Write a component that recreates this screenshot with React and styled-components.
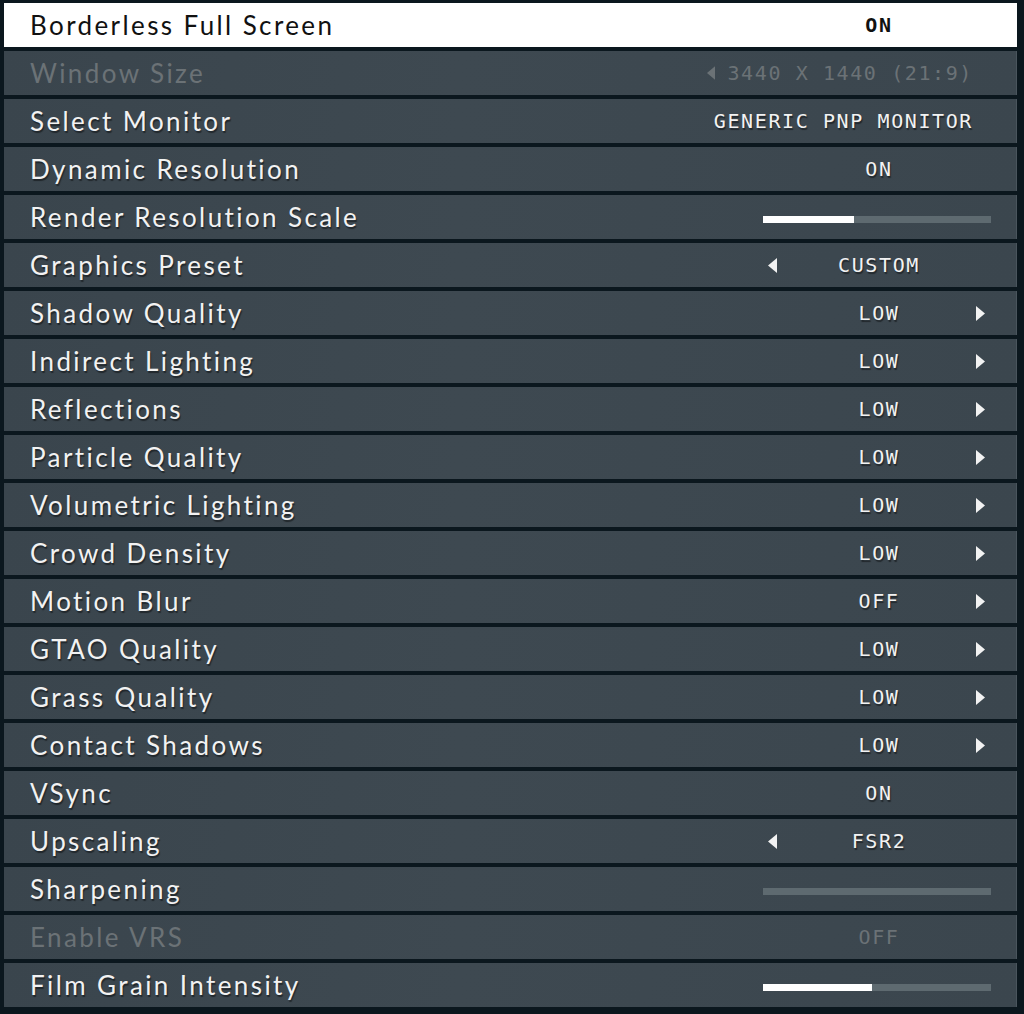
import React from "react";
import styled, { createGlobalStyle } from "styled-components";

const GlobalStyle = createGlobalStyle`
  html, body {
    margin: 0;
    padding: 0;
    background: #0b171e;
  }
`;

const Panel = styled.div`
  display: flex;
  flex-direction: column;
  gap: 4px;
  padding: 3px 7px 7px 4px;
  background: #0b171e;
  min-height: 1014px;
  box-sizing: border-box;
`;

const Row = styled.div`
  height: 44px;
  display: flex;
  align-items: center;
  justify-content: space-between;
  padding-left: 26px;
  box-sizing: border-box;
  background: ${(p) =>
    p.$active
      ? "#ffffff"
      : "linear-gradient(100deg, #3a454d 0%, #3e4951 45%, #3b464e 100%)"};
  border-right: 1px solid ${(p) => (p.$active ? "#ffffff" : "#4a555d")};
`;

const Label = styled.span`
  font-family: "Lato", "Liberation Sans", sans-serif;
  font-size: 26px;
  font-weight: 400;
  letter-spacing: 2.4px;
  color: ${(p) => (p.$active ? "#111" : p.$disabled ? "#6b7276" : "#f2f2f2")};
  text-shadow: ${(p) =>
    p.$active || p.$disabled ? "none" : "1px 2px 1px rgba(0, 0, 0, 0.45)"};
`;

const Control = styled.div`
  width: 228px;
  margin-right: 24px;
  display: grid;
  grid-template-columns: 14px minmax(0, 1fr) 14px;
  align-items: center;
  padding: 0 2px 0 4px;
  box-sizing: border-box;
`;

const Value = styled.span`
  display: flex;
  align-items: center;
  justify-content: ${(p) => (p.$wide ? "flex-end" : "center")};
  gap: 12px;
  white-space: nowrap;
  margin-right: ${(p) => (p.$wide ? "3px" : "0")};
  font-family: "DejaVu Sans Mono", "Liberation Mono", monospace;
  font-size: 20px;
  letter-spacing: 1.6px;
  font-weight: ${(p) => (p.$active ? 700 : 400)};
  color: ${(p) => (p.$active ? "#111" : p.$disabled ? "#6b7276" : "#f2f2f2")};
  text-shadow: ${(p) =>
    p.$active || p.$disabled ? "none" : "1px 2px 1px rgba(0, 0, 0, 0.45)"};

  svg {
    flex-shrink: 0;
  }
`;

const Track = styled.div`
  width: 228px;
  height: 7px;
  margin-right: 25px;
  margin-top: 4px;
  background: #5e6a70;
`;

const Fill = styled.div`
  height: 100%;
  background: #ffffff;
`;

const Arrow = ({ dir, color = "#f2f2f2", w = 9, h = 15 }) => (
  <svg width={w} height={h} viewBox="0 0 9 15" style={{ display: "block" }}>
    {dir === "left" ? (
      <polygon points="9,0 9,15 0,7.5" fill={color} />
    ) : (
      <polygon points="0,0 0,15 9,7.5" fill={color} />
    )}
  </svg>
);

const rows = [
  { label: "Borderless Full Screen", value: "ON", active: true },
  { label: "Window Size", value: "3440 X 1440 (21:9)", disabled: true, wide: true, inlineLeft: true },
  { label: "Select Monitor", value: "GENERIC PNP MONITOR", wide: true },
  { label: "Dynamic Resolution", value: "ON" },
  { label: "Render Resolution Scale", slider: 40 },
  { label: "Graphics Preset", value: "CUSTOM", left: true },
  { label: "Shadow Quality", value: "LOW", right: true },
  { label: "Indirect Lighting", value: "LOW", right: true },
  { label: "Reflections", value: "LOW", right: true },
  { label: "Particle Quality", value: "LOW", right: true },
  { label: "Volumetric Lighting", value: "LOW", right: true },
  { label: "Crowd Density", value: "LOW", right: true },
  { label: "Motion Blur", value: "OFF", right: true },
  { label: "GTAO Quality", value: "LOW", right: true },
  { label: "Grass Quality", value: "LOW", right: true },
  { label: "Contact Shadows", value: "LOW", right: true },
  { label: "VSync", value: "ON" },
  { label: "Upscaling", value: "FSR2", left: true },
  { label: "Sharpening", slider: 0 },
  { label: "Enable VRS", value: "OFF", disabled: true },
  { label: "Film Grain Intensity", slider: 48 },
];

const SettingRow = ({ row }) => (
  <Row $active={row.active}>
    <Label $active={row.active} $disabled={row.disabled}>
      {row.label}
    </Label>
    {row.slider !== undefined ? (
      <Track>
        <Fill style={{ width: `${row.slider}%` }} />
      </Track>
    ) : (
      <Control>
        <span>{row.left && <Arrow dir="left" />}</span>
        <Value $active={row.active} $disabled={row.disabled} $wide={row.wide}>
          {row.inlineLeft && <Arrow dir="left" color="#6b7276" w={8} h={14} />}
          {row.value}
        </Value>
        <span>{row.right && <Arrow dir="right" />}</span>
      </Control>
    )}
  </Row>
);

export default function App() {
  return (
    <>
      <GlobalStyle />
      <Panel>
        {rows.map((row) => (
          <SettingRow key={row.label} row={row} />
        ))}
      </Panel>
    </>
  );
}
